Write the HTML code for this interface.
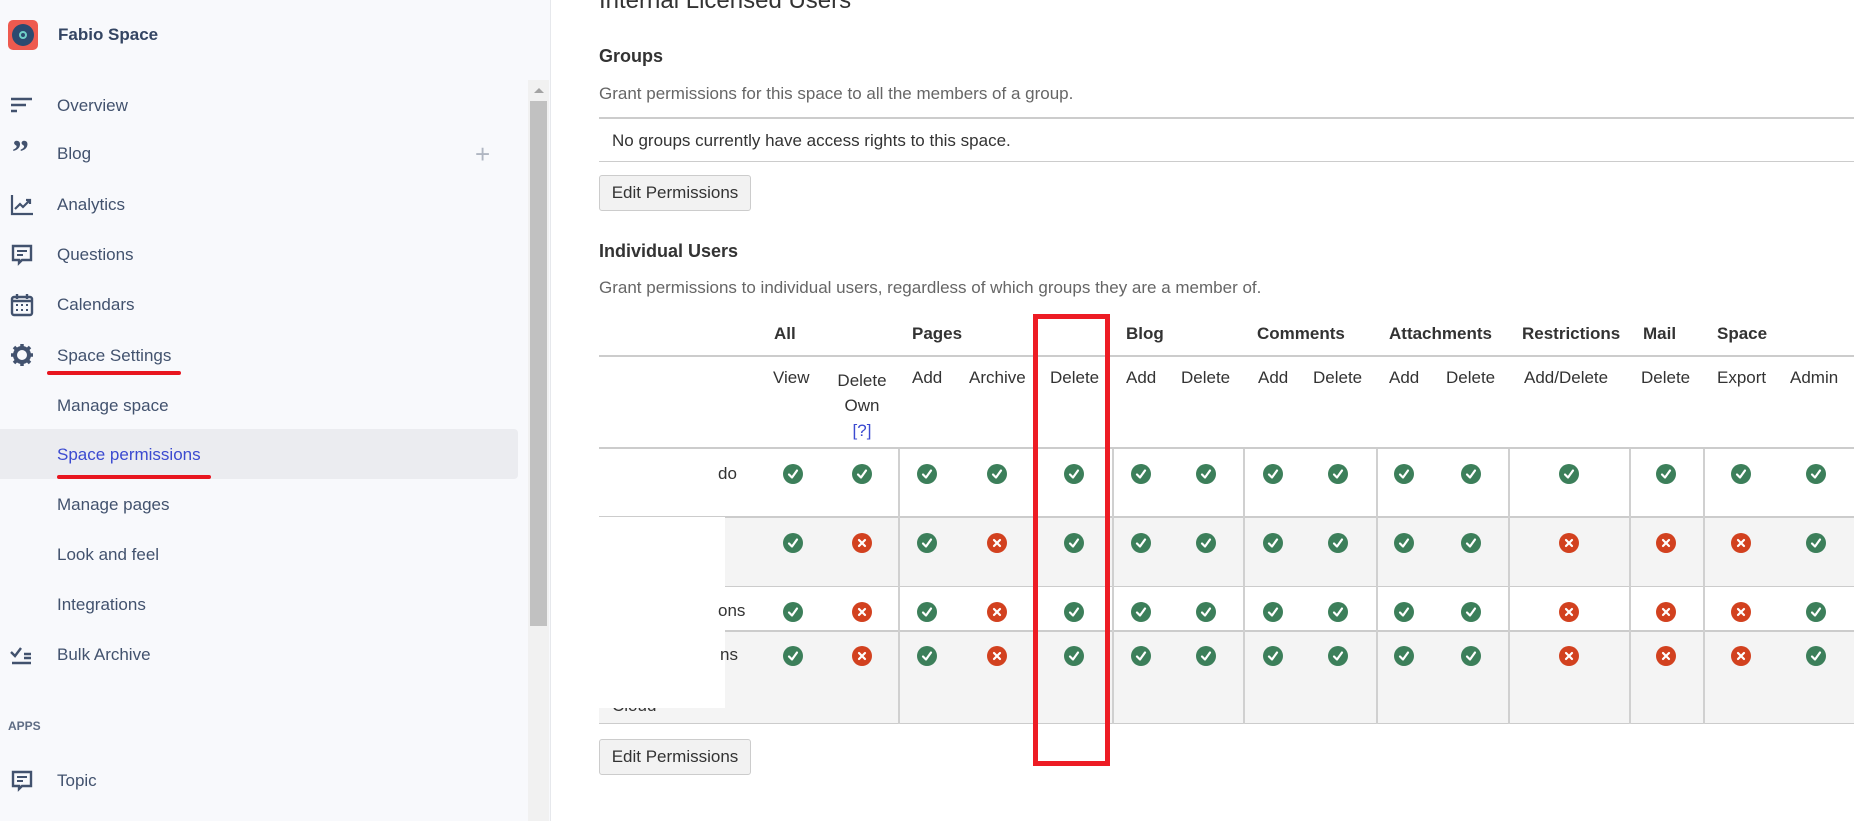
<!DOCTYPE html>
<html><head><meta charset="utf-8"><style>
*{margin:0;padding:0;box-sizing:border-box}
body{width:1860px;height:821px;overflow:hidden;background:#fff;font-family:"Liberation Sans",sans-serif;position:relative}
.a{position:absolute;white-space:nowrap}
#sb{position:absolute;left:0;top:0;width:551px;height:821px;background:#f8f9fc;border-right:1px solid #e6e8ec}
.nav{position:absolute;left:57px;font-size:17px;color:#42526e;line-height:20px}
.ic{position:absolute;left:10px;width:24px;height:24px}
.m{color:#333;font-size:17px;line-height:20px}
.h{font-weight:bold;font-size:18px;color:#333}
.hl{position:absolute;height:1px;background:#ccc}
.btn{position:absolute;left:599px;width:152px;height:36px;border:1px solid #ccc;border-radius:3px;background:#f2f2f2;font-size:17px;color:#333;text-align:center;line-height:34px}
.vl{position:absolute;width:2px;background:#d0d0d0;top:449px;height:275px}
.i{position:absolute;width:20px;height:20px}
</style></head><body>
<svg width="0" height="0" style="position:absolute">
<symbol id="c" viewBox="0 0 20 20"><circle cx="10" cy="10" r="10" fill="#3c7f5a"/><path d="M6 10.5l3 3 5-7" stroke="#fff" stroke-width="2.2" fill="none" stroke-linecap="round" stroke-linejoin="round"/></symbol>
<symbol id="x" viewBox="0 0 20 20"><circle cx="10" cy="10" r="10" fill="#d2411f"/><path d="M7 7l6 6M13 7l-6 6" stroke="#fff" stroke-width="2.2" stroke-linecap="round"/></symbol>
</svg>
<div id="sb">
<div class="a" style="left:8px;top:20px;width:30px;height:30px;border-radius:5px;background:#ee5a4f"><div style="position:absolute;left:4px;top:4px;width:22px;height:22px;border-radius:50%;background:#2c4a70"></div><div style="position:absolute;left:11px;top:11px;width:8px;height:8px;border-radius:50%;border:2px solid #6fd0c8"></div></div>
<div class="a" style="left:58px;top:25px;font-size:17px;font-weight:bold;color:#344563">Fabio Space</div>
<svg class="ic" style="top:94px" viewBox="0 0 24 24"><path d="M1 5h21M1 11h15M1 17h6" stroke="#42526e" stroke-width="2.4"/></svg>
<div class="nav" style="top:96px">Overview</div>
<div class="a" style="left:12px;top:136px;font-size:34px;font-weight:bold;color:#42526e;font-family:'Liberation Serif',serif;line-height:34px">&#8221;</div>
<div class="nav" style="top:144px">Blog</div>
<div class="a" style="left:475px;top:141px;font-size:26px;color:#b0b6c2;line-height:26px">+</div>
<svg class="ic" style="top:193px" viewBox="0 0 24 24"><path d="M2 2v19h21M5 16l5-5 3 3 6-6M16 7h4v4" stroke="#42526e" stroke-width="2.2" fill="none"/></svg>
<div class="nav" style="top:195px">Analytics</div>
<svg class="ic" style="top:243px" viewBox="0 0 24 24"><path d="M3 3h18v14H12l-3 3v-3H3z" stroke="#42526e" stroke-width="2.4" fill="none"/><path d="M7 8h10M7 12h6" stroke="#42526e" stroke-width="2"/></svg>
<div class="nav" style="top:245px">Questions</div>
<svg class="ic" style="top:293px" viewBox="0 0 24 24"><rect x="2" y="4" width="20" height="18" rx="2" stroke="#42526e" stroke-width="2.4" fill="none"/><path d="M2 8h20M7 1v5M17 1v5" stroke="#42526e" stroke-width="2.4"/><path d="M6 12h2M11 12h2M16 12h2M6 17h2M11 17h2M16 17h2" stroke="#42526e" stroke-width="2"/></svg>
<div class="nav" style="top:295px">Calendars</div>
<svg class="ic" style="top:343px" viewBox="0 0 24 24"><circle cx="12" cy="12" r="7" stroke="#42526e" stroke-width="4" fill="none"/><path d="M12 1v5M12 18v5M1 12h5M18 12h5M4 4l4 4M16 16l4 4M4 20l4-4M16 8l4-4" stroke="#42526e" stroke-width="3.5"/></svg>
<div class="nav" style="top:346px">Space Settings</div>
<div class="a" style="left:47px;top:371px;width:134px;height:4px;background:#e8151f;border-radius:2px"></div>
<div class="nav" style="top:396px">Manage space</div>
<div class="a" style="left:0;top:429px;width:518px;height:50px;background:#ebecf0;border-radius:0 4px 4px 0"></div>
<div class="nav" style="top:445px;color:#3b4ad0">Space permissions</div>
<div class="a" style="left:57px;top:475px;width:154px;height:4px;background:#e8151f;border-radius:2px"></div>
<div class="nav" style="top:495px">Manage pages</div>
<div class="nav" style="top:545px">Look and feel</div>
<div class="nav" style="top:595px">Integrations</div>
<svg class="ic" style="top:643px" viewBox="0 0 24 24"><path d="M1 9l4 4 6-8M14 11h7M14 15h7M2 20h19" stroke="#42526e" stroke-width="2.4" fill="none"/></svg>
<div class="nav" style="top:645px">Bulk Archive</div>
<div class="a" style="left:8px;top:719px;font-size:12px;font-weight:bold;color:#5e6c84">APPS</div>
<svg class="ic" style="top:769px" viewBox="0 0 24 24"><path d="M3 3h18v14H12l-3 3v-3H3z" stroke="#42526e" stroke-width="2.4" fill="none"/><path d="M7 8h10M7 12h6" stroke="#42526e" stroke-width="2"/></svg>
<div class="nav" style="top:771px">Topic</div>
<div class="a" style="left:528px;top:80px;width:21px;height:741px;background:#f1f1f1"></div>
<div class="a" style="left:534px;top:88px;width:0;height:0;border-left:5px solid transparent;border-right:5px solid transparent;border-bottom:5px solid #a3a3a3"></div>
<div class="a" style="left:530px;top:101px;width:17px;height:525px;background:#c1c1c1"></div>
</div>

<div class="a" style="left:599px;top:-13px;font-size:24px;color:#333">Internal Licensed Users</div>
<div class="a h" style="left:599px;top:46px">Groups</div>
<div class="a m" style="left:599px;top:84px;color:#666">Grant permissions for this space to all the members of a group.</div>
<div class="hl" style="left:599px;top:117px;width:1255px;height:2px"></div>
<div class="a m" style="left:612px;top:131px">No groups currently have access rights to this space.</div>
<div class="hl" style="left:599px;top:161px;width:1255px"></div>
<div class="btn" style="top:175px">Edit Permissions</div>
<div class="a h" style="left:599px;top:241px">Individual Users</div>
<div class="a m" style="left:599px;top:278px;color:#666">Grant permissions to individual users, regardless of which groups they are a member of.</div>

<div class="a h" style="left:774px;top:324px;font-size:17px">All</div>
<div class="a h" style="left:912px;top:324px;font-size:17px">Pages</div>
<div class="a h" style="left:1126px;top:324px;font-size:17px">Blog</div>
<div class="a h" style="left:1257px;top:324px;font-size:17px">Comments</div>
<div class="a h" style="left:1389px;top:324px;font-size:17px">Attachments</div>
<div class="a h" style="left:1522px;top:324px;font-size:17px">Restrictions</div>
<div class="a h" style="left:1643px;top:324px;font-size:17px">Mail</div>
<div class="a h" style="left:1717px;top:324px;font-size:17px">Space</div>
<div class="hl" style="left:599px;top:355px;width:1255px;height:2px"></div>

<div class="a m" style="top:368px;left:0;width:1860px;height:0">
<span class="a" style="left:773px">View</span>
<span class="a" style="left:837px;text-align:center;width:50px;line-height:25px">Delete<br>Own<br><span style="color:#3b4ad0">[?]</span></span>
<span class="a" style="left:912px">Add</span>
<span class="a" style="left:969px">Archive</span>
<span class="a" style="left:1050px">Delete</span>
<span class="a" style="left:1126px">Add</span>
<span class="a" style="left:1181px">Delete</span>
<span class="a" style="left:1258px">Add</span>
<span class="a" style="left:1313px">Delete</span>
<span class="a" style="left:1389px">Add</span>
<span class="a" style="left:1446px">Delete</span>
<span class="a" style="left:1524px">Add/Delete</span>
<span class="a" style="left:1641px">Delete</span>
<span class="a" style="left:1717px">Export</span>
<span class="a" style="left:1790px">Admin</span>
</div>
<div class="hl" style="left:599px;top:447px;width:1255px;height:2px"></div>
<div class="a" style="left:599px;top:517px;width:1255px;height:69px;background:#f4f4f4"></div>
<div class="a" style="left:599px;top:631px;width:1255px;height:93px;background:#f4f4f4"></div>
<div class="hl" style="left:599px;top:516px;width:1255px;height:2px"></div>
<div class="hl" style="left:599px;top:586px;width:1255px"></div>
<div class="hl" style="left:599px;top:630px;width:1255px;height:2px"></div>
<div class="hl" style="left:599px;top:723px;width:1255px"></div>
<div class="vl" style="left:898px"></div><div class="vl" style="left:1112px"></div><div class="vl" style="left:1243px"></div><div class="vl" style="left:1376px"></div><div class="vl" style="left:1508px"></div><div class="vl" style="left:1629px"></div><div class="vl" style="left:1703px"></div>

<div class="a m" style="left:612px;top:696px;color:#333">Cloud</div>
<div class="a" style="left:599px;top:517px;width:126px;height:191px;background:#fff"></div>
<div class="a m" style="left:718px;top:464px">do</div>
<div class="a m" style="left:718px;top:601px">ons</div>
<div class="a m" style="left:720px;top:645px">ns</div>

<div id="icons"></div>
<svg class="a" style="left:0;top:0" width="1860" height="821">
<g id="r1"></g>
</svg>
<svg class="a" style="left:0;top:0" width="1860" height="821">
<!-- row1 y=464 -->
<use href="#c" x="783" y="464" width="20" height="20"/><use href="#c" x="852" y="464" width="20" height="20"/><use href="#c" x="917" y="464" width="20" height="20"/><use href="#c" x="987" y="464" width="20" height="20"/><use href="#c" x="1064" y="464" width="20" height="20"/><use href="#c" x="1131" y="464" width="20" height="20"/><use href="#c" x="1196" y="464" width="20" height="20"/><use href="#c" x="1263" y="464" width="20" height="20"/><use href="#c" x="1328" y="464" width="20" height="20"/><use href="#c" x="1394" y="464" width="20" height="20"/><use href="#c" x="1461" y="464" width="20" height="20"/><use href="#c" x="1559" y="464" width="20" height="20"/><use href="#c" x="1656" y="464" width="20" height="20"/><use href="#c" x="1731" y="464" width="20" height="20"/><use href="#c" x="1806" y="464" width="20" height="20"/>
<!-- row2 y=533 -->
<use href="#c" x="783" y="533" width="20" height="20"/><use href="#x" x="852" y="533" width="20" height="20"/><use href="#c" x="917" y="533" width="20" height="20"/><use href="#x" x="987" y="533" width="20" height="20"/><use href="#c" x="1064" y="533" width="20" height="20"/><use href="#c" x="1131" y="533" width="20" height="20"/><use href="#c" x="1196" y="533" width="20" height="20"/><use href="#c" x="1263" y="533" width="20" height="20"/><use href="#c" x="1328" y="533" width="20" height="20"/><use href="#c" x="1394" y="533" width="20" height="20"/><use href="#c" x="1461" y="533" width="20" height="20"/><use href="#x" x="1559" y="533" width="20" height="20"/><use href="#x" x="1656" y="533" width="20" height="20"/><use href="#x" x="1731" y="533" width="20" height="20"/><use href="#c" x="1806" y="533" width="20" height="20"/>
<!-- row3 y=602 -->
<use href="#c" x="783" y="602" width="20" height="20"/><use href="#x" x="852" y="602" width="20" height="20"/><use href="#c" x="917" y="602" width="20" height="20"/><use href="#x" x="987" y="602" width="20" height="20"/><use href="#c" x="1064" y="602" width="20" height="20"/><use href="#c" x="1131" y="602" width="20" height="20"/><use href="#c" x="1196" y="602" width="20" height="20"/><use href="#c" x="1263" y="602" width="20" height="20"/><use href="#c" x="1328" y="602" width="20" height="20"/><use href="#c" x="1394" y="602" width="20" height="20"/><use href="#c" x="1461" y="602" width="20" height="20"/><use href="#x" x="1559" y="602" width="20" height="20"/><use href="#x" x="1656" y="602" width="20" height="20"/><use href="#x" x="1731" y="602" width="20" height="20"/><use href="#c" x="1806" y="602" width="20" height="20"/>
<!-- row4 y=646 -->
<use href="#c" x="783" y="646" width="20" height="20"/><use href="#x" x="852" y="646" width="20" height="20"/><use href="#c" x="917" y="646" width="20" height="20"/><use href="#x" x="987" y="646" width="20" height="20"/><use href="#c" x="1064" y="646" width="20" height="20"/><use href="#c" x="1131" y="646" width="20" height="20"/><use href="#c" x="1196" y="646" width="20" height="20"/><use href="#c" x="1263" y="646" width="20" height="20"/><use href="#c" x="1328" y="646" width="20" height="20"/><use href="#c" x="1394" y="646" width="20" height="20"/><use href="#c" x="1461" y="646" width="20" height="20"/><use href="#x" x="1559" y="646" width="20" height="20"/><use href="#x" x="1656" y="646" width="20" height="20"/><use href="#x" x="1731" y="646" width="20" height="20"/><use href="#c" x="1806" y="646" width="20" height="20"/>
</svg>
<div class="btn" style="top:739px">Edit Permissions</div>
<div class="a" style="left:1033px;top:314px;width:77px;height:452px;border:5px solid #ed1c24"></div>
</body></html>
